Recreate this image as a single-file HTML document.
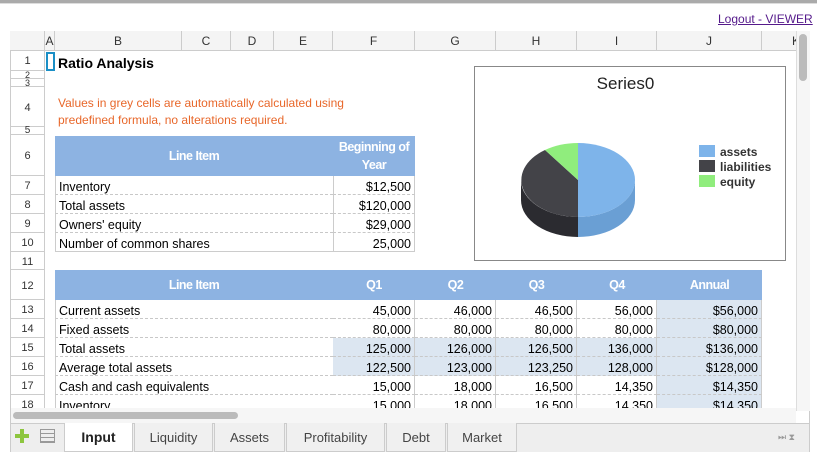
<!DOCTYPE html>
<html><head><meta charset="utf-8"><style>
*{margin:0;padding:0;box-sizing:border-box}
body{width:817px;height:452px;background:#fff;position:relative;overflow:hidden;font-family:"Liberation Sans",sans-serif;font-size:13px;color:#000}
.a{position:absolute}
.ch{position:absolute;top:31px;height:20px;border-right:1px solid #ccc;text-align:center;font-size:12px;line-height:21px;color:#333}
.rh{position:absolute;left:10px;width:35px;border-bottom:1px solid #ccc;text-align:center;font-size:11px;color:#333}
.c{position:absolute;height:19px;line-height:23px;font-size:12.5px;white-space:nowrap;overflow:hidden;border-bottom:1px dashed #c8c8c8}
.r{text-align:right;padding-right:3px;border-right:1px solid #ccc}
.l{padding-left:3px;border-left:1px solid #ccc}
.bl{background:#dce6f1}
.hd{position:absolute;background:#8db3e2;color:#fff;font-weight:bold;font-size:12.5px;text-align:center;letter-spacing:-.5px}
.tab{position:absolute;top:423px;height:29px;border:1px solid #ccc;border-top:none;background:#f0f0f0;font-size:13px;line-height:29px;text-align:center;color:#444}
</style></head><body>
<div class="a" style="left:0;top:0;width:817px;height:3px;background:#aaa"></div>
<div class="a" style="left:0;top:3px;width:817px;height:1px;background:#ddd"></div>
<div class="a" style="left:718px;top:12px;font-size:12px;color:#551a8b;text-decoration:underline">Logout - VIEWER</div>
<div class="a" style="left:10px;top:31px;width:800px;height:392px;border:1px solid #ccc;border-bottom:none"></div>
<div class="a" style="left:10px;top:31px;width:786px;height:20px;background:#f4f4f4;border-bottom:1px solid #ccc"></div>
<div class="a" style="left:44px;top:31px;width:1px;height:392px;background:#ccc"></div>
<div class="ch" style="left:45px;width:10px">A</div>
<div class="ch" style="left:55px;width:127px">B</div>
<div class="ch" style="left:182px;width:49px">C</div>
<div class="ch" style="left:231px;width:43px">D</div>
<div class="ch" style="left:274px;width:59px">E</div>
<div class="ch" style="left:333px;width:82px">F</div>
<div class="ch" style="left:415px;width:81px">G</div>
<div class="ch" style="left:496px;width:81px">H</div>
<div class="ch" style="left:577px;width:80px">I</div>
<div class="ch" style="left:657px;width:105px">J</div>
<div class="ch" style="left:762px;width:34px;border:none;text-align:left;padding-left:30px">K</div>
<div class="a" style="left:796px;top:31px;width:14px;height:380px;background:#f6f6f6;border-left:1px solid #ddd"></div>
<div class="a" style="left:799px;top:34px;width:8px;height:47px;background:#bbb;border-radius:4px"></div>

<div class="rh" style="top:51px;height:20px;line-height:21px">1</div>
<div class="rh" style="top:71px;height:8px;line-height:8px;font-size:9px">2</div>
<div class="rh" style="top:79px;height:8px;line-height:8px;font-size:9px">3</div>
<div class="rh" style="top:87px;height:40px;line-height:42px">4</div>
<div class="rh" style="top:127px;height:8px;line-height:8px;font-size:10px">5</div>
<div class="rh" style="top:135px;height:41px;line-height:42px">6</div>
<div class="rh" style="top:176px;height:19px;line-height:21px">7</div>
<div class="rh" style="top:195px;height:19px;line-height:21px">8</div>
<div class="rh" style="top:214px;height:19px;line-height:21px">9</div>
<div class="rh" style="top:233px;height:19px;line-height:21px">10</div>
<div class="rh" style="top:252px;height:18px;line-height:20px">11</div>
<div class="rh" style="top:270px;height:30px;line-height:32px">12</div>
<div class="rh" style="top:300px;height:19px;line-height:21px">13</div>
<div class="rh" style="top:319px;height:19px;line-height:21px">14</div>
<div class="rh" style="top:338px;height:19px;line-height:21px">15</div>
<div class="rh" style="top:357px;height:19px;line-height:21px">16</div>
<div class="rh" style="top:376px;height:19px;line-height:21px">17</div>
<div class="rh" style="top:395px;height:16px;line-height:21px;border:none">18</div>

<div class="a" style="left:46px;top:52px;width:9px;height:19px;border:2px solid #1a8fc6"></div>
<div class="a" style="left:58px;top:55px;font-weight:bold;font-size:14px">Ratio Analysis</div>
<div class="a" style="left:58px;top:95px;font-size:12px;line-height:17px;color:#e8672a">Values in grey cells are automatically calculated using<br>predefined formula, no alterations required.</div>

<div class="hd" style="left:55px;top:136px;width:278px;height:40px;line-height:40px">Line Item</div>
<div class="hd" style="left:333px;top:136px;width:82px;height:40px;line-height:18px;padding-top:2px">Beginning of<br>Year</div>
<div class="c l" style="left:55px;top:176px;width:278px">Inventory</div><div class="c r" style="left:333px;top:176px;width:82px;border-left:1px solid #ccc">$12,500</div>
<div class="c l" style="left:55px;top:195px;width:278px">Total assets</div><div class="c r" style="left:333px;top:195px;width:82px;border-left:1px solid #ccc">$120,000</div>
<div class="c l" style="left:55px;top:214px;width:278px">Owners' equity</div><div class="c r" style="left:333px;top:214px;width:82px;border-left:1px solid #ccc">$29,000</div>
<div class="c l" style="left:55px;top:233px;width:278px;border-bottom:1px solid #ccc">Number of common shares</div><div class="c r" style="left:333px;top:233px;width:82px;border-left:1px solid #ccc;border-bottom:1px solid #ccc">25,000</div>

<div class="a" style="left:474px;top:66px;width:312px;height:195px;border:1px solid #888;background:#fff"></div>
<div class="a" style="left:474px;top:74px;width:312px;text-align:center;font-size:17px;color:#222;padding-right:9px">Series0</div>
<svg class="a" style="left:474px;top:66px" width="312" height="195">
<path d="M104 114 L104 134 A57 37 0 0 0 161 114 Z" fill="#6a9fd4"/>
<path d="M47 114 L47 134 A57 37 0 0 0 104 171 L104 151 A57 37 0 0 1 47 114Z" fill="#2b2b30"/>
<path d="M104 151 A57 37 0 0 0 161 114 L161 134 A57 37 0 0 1 104 171Z" fill="#6a9fd4"/>
<path d="M104 114 L104 77 A57 37 0 0 1 104 151 Z" fill="#7eb4ea"/>
<path d="M104 114 L104 151 A57 37 0 0 1 71 84 Z" fill="#434348"/>
<path d="M104 114 L71 84 A57 37 0 0 1 104 77 Z" fill="#90ed7d"/>
<rect x="225" y="79" width="16" height="12" fill="#7eb4ea"/>
<rect x="225" y="94" width="16" height="12" fill="#434348"/>
<rect x="225" y="109" width="16" height="12" fill="#90ed7d"/>
<text x="246" y="90" font-family="Liberation Sans" font-weight="bold" font-size="12" fill="#333">assets</text>
<text x="246" y="105" font-family="Liberation Sans" font-weight="bold" font-size="12" fill="#333">liabilities</text>
<text x="246" y="120" font-family="Liberation Sans" font-weight="bold" font-size="12" fill="#333">equity</text>
</svg>

<div class="hd" style="left:55px;top:270px;width:278px;height:30px;line-height:30px">Line Item</div>
<div class="hd" style="left:333px;top:270px;width:82px;height:30px;line-height:30px">Q1</div>
<div class="hd" style="left:415px;top:270px;width:81px;height:30px;line-height:30px">Q2</div>
<div class="hd" style="left:496px;top:270px;width:81px;height:30px;line-height:30px">Q3</div>
<div class="hd" style="left:577px;top:270px;width:80px;height:30px;line-height:30px">Q4</div>
<div class="hd" style="left:657px;top:270px;width:105px;height:30px;line-height:30px">Annual</div>

<div class="c l" style="left:55px;top:300px;width:278px">Current assets</div><div class="c r" style="left:333px;top:300px;width:82px">45,000</div><div class="c r" style="left:415px;top:300px;width:81px">46,000</div><div class="c r" style="left:496px;top:300px;width:81px">46,500</div><div class="c r" style="left:577px;top:300px;width:80px">56,000</div><div class="c r bl" style="left:657px;top:300px;width:105px">$56,000</div>
<div class="c l" style="left:55px;top:319px;width:278px">Fixed assets</div><div class="c r" style="left:333px;top:319px;width:82px">80,000</div><div class="c r" style="left:415px;top:319px;width:81px">80,000</div><div class="c r" style="left:496px;top:319px;width:81px">80,000</div><div class="c r" style="left:577px;top:319px;width:80px">80,000</div><div class="c r bl" style="left:657px;top:319px;width:105px">$80,000</div>
<div class="c l" style="left:55px;top:338px;width:278px">Total assets</div><div class="c r bl" style="left:333px;top:338px;width:82px">125,000</div><div class="c r bl" style="left:415px;top:338px;width:81px">126,000</div><div class="c r bl" style="left:496px;top:338px;width:81px">126,500</div><div class="c r bl" style="left:577px;top:338px;width:80px">136,000</div><div class="c r bl" style="left:657px;top:338px;width:105px">$136,000</div>
<div class="c l" style="left:55px;top:357px;width:278px">Average total assets</div><div class="c r bl" style="left:333px;top:357px;width:82px">122,500</div><div class="c r bl" style="left:415px;top:357px;width:81px">123,000</div><div class="c r bl" style="left:496px;top:357px;width:81px">123,250</div><div class="c r bl" style="left:577px;top:357px;width:80px">128,000</div><div class="c r bl" style="left:657px;top:357px;width:105px">$128,000</div>
<div class="c l" style="left:55px;top:376px;width:278px">Cash and cash equivalents</div><div class="c r" style="left:333px;top:376px;width:82px">15,000</div><div class="c r" style="left:415px;top:376px;width:81px">18,000</div><div class="c r" style="left:496px;top:376px;width:81px">16,500</div><div class="c r" style="left:577px;top:376px;width:80px">14,350</div><div class="c r bl" style="left:657px;top:376px;width:105px">$14,350</div>
<div class="c l" style="left:55px;top:395px;width:278px;height:16px;border:none;border-left:1px solid #ccc">Inventory</div><div class="c r" style="left:333px;top:395px;width:82px;height:16px;border-bottom:none">15,000</div><div class="c r" style="left:415px;top:395px;width:81px;height:16px;border-bottom:none">18,000</div><div class="c r" style="left:496px;top:395px;width:81px;height:16px;border-bottom:none">16,500</div><div class="c r" style="left:577px;top:395px;width:80px;height:16px;border-bottom:none">14,350</div><div class="c r bl" style="left:657px;top:395px;width:105px;height:16px;border-bottom:none">$14,350</div>

<div class="a" style="left:11px;top:408px;width:785px;height:15px;background:#f6f6f6"></div>
<div class="a" style="left:13px;top:412px;width:225px;height:7px;background:#bbb;border-radius:4px"></div>

<div class="a" style="left:10px;top:423px;width:800px;height:29px;background:#eee;border-left:1px solid #ccc;border-right:1px solid #ccc;border-top:1px solid #ccc"></div>
<div class="a" style="left:15px;top:434px;width:14px;height:4px;background:#8dc63f"></div>
<div class="a" style="left:20px;top:429px;width:4px;height:14px;background:#8dc63f"></div>
<div class="a" style="left:40px;top:429px;width:15px;height:14px;border:1px solid #999;background:repeating-linear-gradient(#eee 0 3px,#999 3px 4px)"></div>
<div class="tab" style="left:64px;width:69px;background:#fff;font-weight:bold;color:#222;font-size:14px">Input</div>
<div class="tab" style="left:134px;width:79px">Liquidity</div>
<div class="tab" style="left:214px;width:71px">Assets</div>
<div class="tab" style="left:286px;width:99px">Profitability</div>
<div class="tab" style="left:386px;width:60px">Debt</div>
<div class="tab" style="left:447px;width:70px">Market</div>
<div class="a" style="left:778px;top:432px;font-size:9px;color:#999">⏭ ⧗</div>
</body></html>
